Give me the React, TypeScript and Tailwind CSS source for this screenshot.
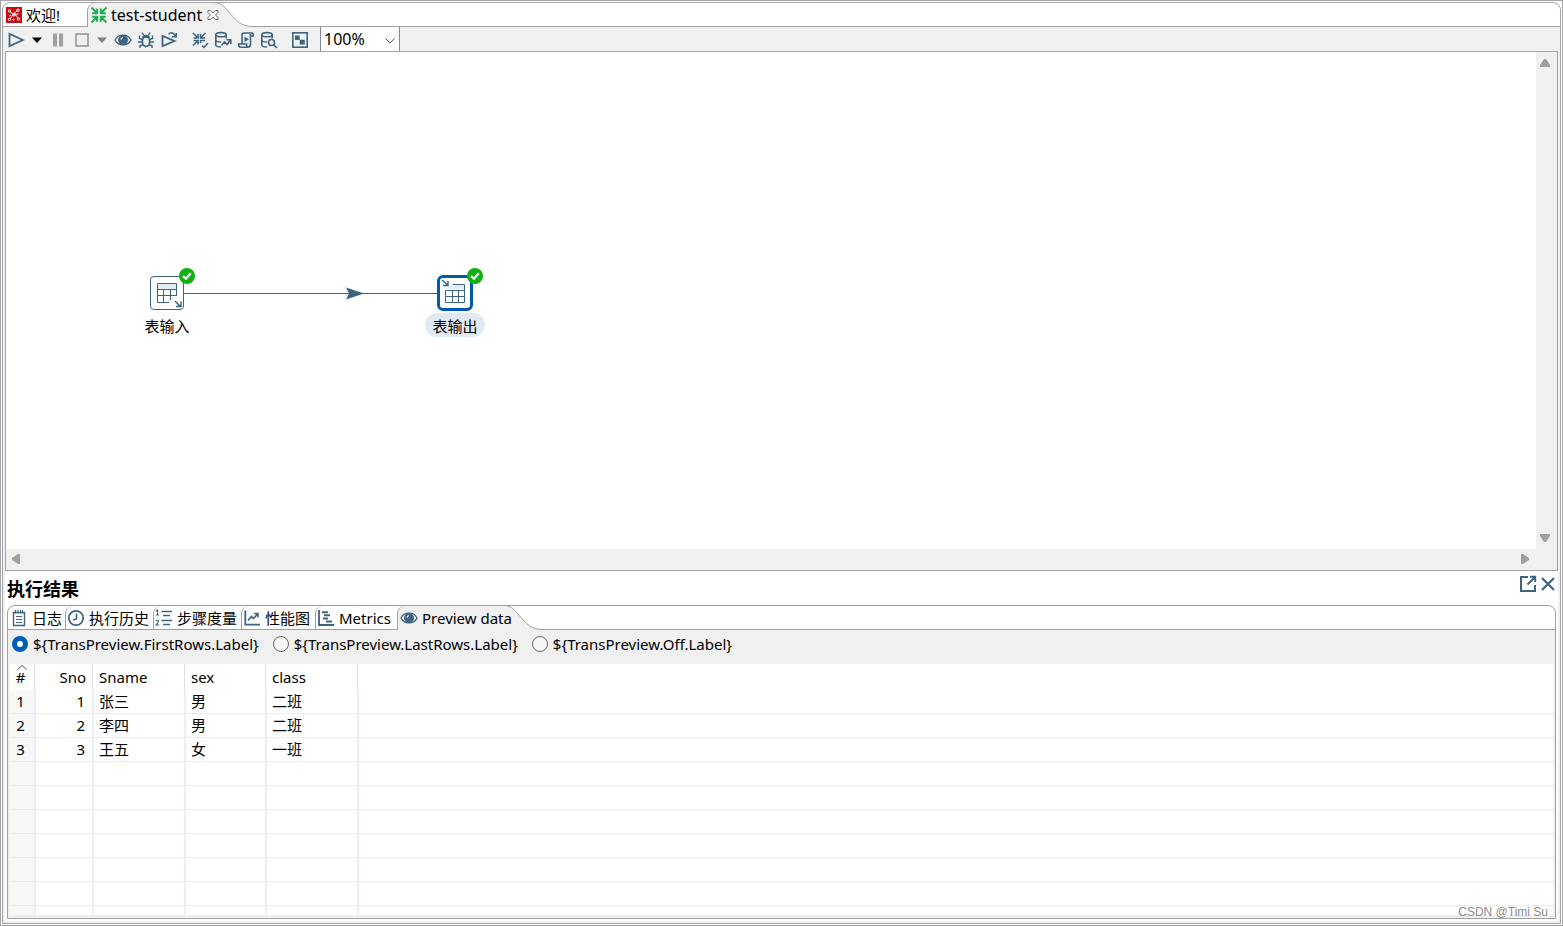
import type { ReactNode } from "react";

const C = "#3d6480";

function Glyph({ children, size = 18 }: { children: ReactNode; size?: number }) {
  return (
    <svg width={size} height={18} viewBox={`0 0 ${size} 18`} fill="none" stroke={C} strokeWidth="1.6" aria-hidden="true" className="block shrink-0">
      {children}
    </svg>
  );
}

const Eye = () => (
  <Glyph>
    <path d="M1 9C4 2.500 14 2.500 17 9C14 15.500 4 15.500 1 9Z" strokeWidth="1.300" />
    <circle cx="9" cy="9" r="5" fill={C} stroke="none" />
    <path d="M7 8.800A2 2 0 0 1 9 6.800" stroke="#fff" strokeWidth="1.100" />
  </Glyph>
);

const Play = () => (
  <Glyph>
    <path d="M2.500 3V15L16 9Z" strokeWidth="1.800" />
  </Glyph>
);

const Pause = () => (
  <Glyph>
    <path d="M4 2.500H8V15.500H4ZM10 2.500H14V15.500H10Z" fill="#a0a0a0" stroke="none" />
  </Glyph>
);

const Stop = () => (
  <Glyph>
    <rect x="3" y="3" width="12" height="12" stroke="#a0a0a0" strokeWidth="1.800" />
  </Glyph>
);

const Down = ({ color }: { color: string }) => (
  <Glyph size={10}>
    <path d="M0 6.500H10L5 12Z" fill={color} stroke="none" />
  </Glyph>
);

const Bug = () => (
  <Glyph>
    <ellipse cx="9" cy="10.500" rx="3.700" ry="5" strokeWidth="1.800" />
    <path d="M6 6C6.300 4 11.700 4 12 6Z" fill={C} />
    <path d="M6.500 4L5 1.500M11.500 4L13 1.500M5.500 8.500L2.500 7.500V4.500M12.500 8.500L15.500 7.500V4.500M5.300 11H1M12.700 11H17M6 14L3 14.500V17M12 14L15 14.500V17" strokeWidth="1.400" />
  </Glyph>
);

const Replay = () => (
  <Glyph>
    <path d="M2.500 4.800V15.200L14.500 10Z" strokeWidth="1.800" />
    <path d="M8.500 3.200C11 .8 14 1.800 15.500 5M16.300 2V5.700H12" strokeWidth="1.500" />
  </Glyph>
);

const Verify = () => (
  <Glyph>
    <path d="M2 2L6.500 6.500M14.500 2L10 6.500M2 14.500L6.500 10M7 3V7H2.500M9.500 3V7H14M2.500 9.500H7V13.500M14 9.500H9.500V12" strokeWidth="1.600" />
    <path d="M11 14.500L13 16.500L17 12" strokeWidth="1.500" />
  </Glyph>
);

const Cylinder = () => (
  <>
    <ellipse cx="7" cy="3.700" rx="5.200" ry="2.100" />
    <path d="M1.800 4V14C2 15.500 5 16 7 16M1.800 9C2 10.500 5 11 7 11M12.200 4V7.500" />
  </>
);

const DbImpact = () => (
  <Glyph>
    <Cylinder />
    <path d="M7.500 14.500L10.500 11L13 13.500L16.500 9M12.500 8.700H16.800V13" />
  </Glyph>
);

const DbExplore = () => (
  <Glyph>
    <Cylinder />
    <circle cx="11.500" cy="11.500" r="3" />
    <path d="M13.700 13.700L17 17" />
  </Glyph>
);

const Script = () => (
  <Glyph>
    <path d="M5 13V4Q5 2 7 2H14.500Q16.500 2 16.300 5H13.500M13.500 3V13Q13.500 16.200 10.500 16.200H3.500Q1.500 16.200 1.700 13H9.500Q9.500 16 11.500 16" />
    <path d="M7.500 5.500V11L12 8.300Z" fill={C} stroke="none" />
  </Glyph>
);

const Arrange = () => (
  <Glyph>
    <rect x="1.800" y="1.800" width="14.400" height="14.400" strokeWidth="1.600" />
    <path d="M4 4.500H8.700V9H4ZM8.700 8.700H13.800V13.500H8.700Z" fill={C} stroke="none" />
  </Glyph>
);

const Transform = () => (
  <svg width="18" height="18" viewBox="0 0 18 18" fill="none" stroke="#1caf50" strokeWidth="1.900" aria-hidden="true" className="block shrink-0">
    <path d="M1.500 1.500L7 7M16.500 1.500L11 7M1.500 16.500L7 11M16.500 16.500L11 11M7.200 2.500V7.200H2.200M10.800 2.500V7.200H15.800M2.200 10.800H7.200V15.800M15.800 10.800H10.800V15.800" />
  </svg>
);

const Logo = () => (
  <svg width="16" height="16" viewBox="0 0 16 16" fill="none" stroke="#fff" strokeWidth="0.900" aria-hidden="true" className="block shrink-0">
    <rect width="16" height="16" fill="#c60c12" stroke="none" />
    <path d="M4 4.500L7 7.500L11.500 3.500M7 7.500L4 12M7 7.500H9.500L12 11.500M5 8L3 9M9.500 7.500L12.500 7" />
    <circle cx="3.500" cy="4" r="1.200" />
    <circle cx="12" cy="3.200" r="1.200" />
    <circle cx="3.500" cy="12.300" r="1.200" />
    <circle cx="12.500" cy="12" r="1.200" />
    <circle cx="8" cy="7.500" r="1.500" />
    <circle cx="7.500" cy="12.800" r=".7" />
  </svg>
);

const Notes = () => (
  <Glyph>
    <path d="M3.500 3.500H14.500V16.500H3.500Z" strokeWidth="1.400" />
    <path d="M5.500 1V4.500M8 1V4.500M10.500 1V4.500M12.500 1V4.500" strokeWidth="1.100" />
    <path d="M6 7.500H12M6 10.500H12M6 13.500H12" strokeWidth="1.200" />
  </Glyph>
);

const Clock = () => (
  <Glyph>
    <circle cx="9" cy="9" r="7.200" strokeWidth="1.700" />
    <path d="M9.500 4.500V10L6 11" strokeWidth="1.600" />
  </Glyph>
);

const Steps = () => (
  <Glyph>
    <path d="M6.500 2.500H17M8 6.500H15M6.500 11.500H17M8 15.500H15" strokeWidth="1.300" />
    <path d="M1 2L2.500 1V6M1 6H4M1 12Q2.500 10.500 3.500 12Q3.500 13.500 1 16H4.200" strokeWidth="1.100" />
  </Glyph>
);

const Graph = () => (
  <Glyph>
    <path d="M2.300 1.500V15.700H17" strokeWidth="1.800" />
    <path d="M5 11.500L8.500 7.500L10.500 9.500L14.500 5M11 4.500H15V8.500" />
  </Glyph>
);

const Gantt = () => (
  <Glyph>
    <path d="M2 1V16H17" strokeWidth="1.800" />
    <path d="M5 3.300H11M7 6.300H13M6 9.500H11M9 12.500H15" strokeWidth="2" />
  </Glyph>
);

const Check = () => (
  <svg width="16" height="16" viewBox="0 0 16 16" fill="none" aria-hidden="true" className="block">
    <circle cx="8" cy="8" r="8" fill="#0fb010" />
    <path d="M4 8.200L7 10.800L11.800 5.200" stroke="#fff" strokeWidth="2.200" />
  </svg>
);

function TabEnd() {
  return (
    <svg width="40" height="25" viewBox="0 0 40 25" aria-hidden="true" className="absolute -top-px -right-9 block">
      <path d="M0 .5C10 .5 12 6 18 12.500S28 24.500 40 24.500V25H0Z" fill="#f0f0f0" />
      <path d="M0 .5C10 .5 12 6 18 12.500S28 24.500 40 24.500" fill="none" stroke="#a0a0a0" />
    </svg>
  );
}

function Tool({ label, className = "", children }: { label: string; className?: string; children: ReactNode }) {
  return (
    <button type="button" aria-label={label} className={`shrink-0 ${className}`}>
      {children}
    </button>
  );
}

const resultTabs = [
  { label: "日志", icon: <Notes />, box: "w-[57px] pl-[2px]" },
  { label: "执行历史", icon: <Clock />, box: "w-[88px] pl-px rounded-tl-lg border-l" },
  { label: "步骤度量", icon: <Steps />, box: "w-[88px] pl-px rounded-tl-lg border-l" },
  { label: "性能图", icon: <Graph />, box: "w-[74px] pl-px rounded-tl-lg border-l" },
  { label: "Metrics", icon: <Gantt />, box: "w-[82px] pl-px rounded-tl-lg border-l" },
];

const modes = ["${TransPreview.FirstRows.Label}", "${TransPreview.LastRows.Label}", "${TransPreview.Off.Label}"];

const rows = [
  ["1", "1", "张三", "男", "二班"],
  ["2", "2", "李四", "男", "二班"],
  ["3", "3", "王五", "女", "一班"],
  ...Array.from({ length: 6 }, () => ["", "", "", "", ""]),
];

function Canvas() {
  return (
    <main className="flex min-h-[300px] flex-1 flex-col border border-[#a5a5a9] bg-[#f0f0f0]">
      <div className="flex flex-1">
        <div className="relative flex-1 overflow-hidden bg-white">
          <svg width="260" height="14" viewBox="0 0 260 14" aria-hidden="true" className="absolute top-[234px] left-[177px]">
            <path d="M0 7.500H260" stroke={C} />
            <path d="M163 1.500L181 7.500L163 13.500L166 7.500Z" fill={C} />
          </svg>
          <div className="absolute top-[224px] left-[131px] flex w-[60px] flex-col items-center">
            <div className="relative h-[34px] w-[34px] rounded-[4px] border border-[#3d6480] bg-white">
              <svg width="32" height="32" viewBox="0 0 32 32" fill="none" stroke={C} aria-hidden="true">
                <path d="M6.500 12H26V6.500H6.500Z" fill="#e3edf5" stroke="none" />
                <path d="M25.500 19V6.500H6.500V25.500H18M6.500 12.500H25.500M6.500 18.500H25.500M12.500 12.500V25.500M19.500 12.500V23" />
                <path d="M24 24L29.500 29.500M30 24.500V29.500H25" strokeWidth="1.500" />
              </svg>
              <div className="absolute -top-[9px] -right-[12px]"><Check /></div>
            </div>
            <span className="mt-[4px] h-6 leading-6">表输入</span>
          </div>
          <div className="absolute top-[223px] left-[419px] flex w-[60px] flex-col items-center">
            <div className="relative h-9 w-9 rounded-[6px] border-3 border-[#005ca8] bg-white">
              <svg width="30" height="30" viewBox="0 0 30 30" fill="none" stroke={C} aria-hidden="true">
                <path d="M6 11H24V6H13Z" fill="#e3edf5" stroke="none" />
                <path d="M13 6.500H24.500V24.500H5.500V12.500H24.500M5.500 18.500H24.500M12.500 12.500V24.500M18.500 12.500V24.500" />
                <path d="M2 2L8 7.500M8 3V7.500H3" strokeWidth="1.500" />
              </svg>
              <div className="absolute -top-[10px] -right-[13px]"><Check /></div>
            </div>
            <span className="mt-[2px] h-6 w-[60px] rounded-full bg-[#e0eaf5] pt-px text-center leading-6">表输出</span>
          </div>
        </div>
        <div className="flex w-[21px] flex-col items-center justify-between py-[6px] pr-[3px]">
          <svg width="10" height="10" viewBox="0 0 10 10" aria-hidden="true"><path d="M4 1H6L10 7V9H0V7Z" fill="#a0a0a0" /></svg>
          <svg width="10" height="10" viewBox="0 0 10 10" aria-hidden="true"><path d="M4 9H6L10 3V1H0V3Z" fill="#a0a0a0" /></svg>
        </div>
      </div>
      <div className="flex h-[21px] items-center justify-between pr-[27px] pb-[2px] pl-[5px]">
        <svg width="10" height="10" viewBox="0 0 10 10" aria-hidden="true"><path d="M1 4V6L7 10H9V0H7Z" fill="#a0a0a0" /></svg>
        <svg width="10" height="10" viewBox="0 0 10 10" aria-hidden="true"><path d="M9 4V6L3 10H1V0H3Z" fill="#a0a0a0" /></svg>
      </div>
    </main>
  );
}

export default function App() {
  return (
    <div className="flex min-h-screen flex-col border border-[#a5a5a9] bg-white p-px font-['Noto_Sans','Noto_Sans_CJK_SC',sans-serif] text-[15px] leading-6 text-black">
      <div className="flex flex-1 flex-col rounded-t-lg border border-[#a5a5a9] bg-[#f0f0f0]">
        <div role="tablist" className="flex h-6 rounded-t-lg border-b border-[#a0a0a0] bg-white">
          <button type="button" role="tab" aria-selected="false" className="flex w-[84px] items-center gap-1 pl-[3px] whitespace-nowrap">
            <Logo />
            欢迎!
          </button>
          <div className="relative -mb-px flex w-[130px] items-center rounded-tl-lg border-l border-[#a0a0a0] bg-[#f0f0f0] pl-[2px]">
            <TabEnd />
            <button type="button" role="tab" aria-selected="true" className="relative flex items-center gap-[3px] text-base leading-6 whitespace-nowrap">
              <Transform />
              test-student
            </button>
            <button type="button" aria-label="Close" className="relative ml-[5px] shrink-0">
              <svg width="12" height="12" viewBox="0 0 12 12" fill="#fff" stroke="#666" aria-hidden="true">
                <path d="M1 1.500H3.500L6 4L8.500 1.500H11V3.500L8.500 6L11 8.500V10.500H8.500L6 8L3.500 10.500H1V8.500L3.500 6L1 3.500Z" />
              </svg>
            </button>
          </div>
        </div>

        <div role="toolbar" aria-label="Transformation" className="flex h-6 items-end pl-1 [&>button]:mb-[2px]">
          <Tool label="Run"><Play /></Tool>
          <Tool label="Run options" className="ml-[7px]"><Down color="#000" /></Tool>
          <Tool label="Pause" className="ml-[7px]"><Pause /></Tool>
          <Tool label="Stop" className="ml-[6px]"><Stop /></Tool>
          <Tool label="Stop options" className="ml-[6px]"><Down color="#808080" /></Tool>
          <Tool label="Preview" className="ml-[7px]"><Eye /></Tool>
          <Tool label="Debug" className="ml-[5px]"><Bug /></Tool>
          <Tool label="Replay" className="ml-[5px]"><Replay /></Tool>
          <Tool label="Verify" className="ml-[13px]"><Verify /></Tool>
          <Tool label="Impact" className="ml-[5px]"><DbImpact /></Tool>
          <Tool label="SQL" className="ml-[5px]"><Script /></Tool>
          <Tool label="Explore database" className="ml-[5px]"><DbExplore /></Tool>
          <Tool label="Show results" className="ml-[13px]"><Arrange /></Tool>
          <div className="relative ml-[11px] h-6 w-20 shrink-0">
            <select aria-label="Zoom" defaultValue="100%" className="h-full w-full appearance-none border-x border-[#8a8a8a] bg-white pl-[3px] text-base leading-6">
              <option>100%</option>
              <option>200%</option>
            </select>
            <svg width="10" height="6" viewBox="0 0 10 6" fill="none" stroke="#555" aria-hidden="true" className="pointer-events-none absolute top-[11px] right-[5px]">
              <path d="M.5 .5L5 5L9.500 .5" />
            </svg>
          </div>
        </div>

        <div className="flex flex-1 flex-col px-[2px] pb-[2px]">
          <Canvas />

          <section className="flex flex-col bg-white px-[2px] pb-[2px]">
            <header className="flex h-[34px] items-center justify-between">
              <h2 className="pt-px text-[18px] font-bold">执行结果</h2>
              <div className="mb-2 flex gap-[4px] pr-px">
                <Tool label="Maximize">
                  <Glyph>
                    <path d="M9 2H2V16H16V10M11 1.800H16.200V7M16 2L8.500 9.500" strokeWidth="2" />
                  </Glyph>
                </Tool>
                <Tool label="Close results">
                  <Glyph size={14}>
                    <path d="M1 3L13 15M13 3L1 15" strokeWidth="2.200" />
                  </Glyph>
                </Tool>
              </div>
            </header>

            <div className="rounded-t-lg border border-[#a0a0a0] bg-[#f0f0f0]">
              <div role="tablist" className="flex h-6 rounded-t-lg border-b border-[#a0a0a0] bg-white">
                {resultTabs.map((t) => (
                  <button key={t.label} type="button" role="tab" aria-selected="false" className={`flex shrink-0 items-center gap-1 border-[#a0a0a0] whitespace-nowrap ${t.box}`}>
                    {t.icon}
                    {t.label}
                  </button>
                ))}
                <div className="relative -mb-px flex w-[110px] items-center rounded-tl-lg border-l border-[#a0a0a0] bg-[#f0f0f0] pl-[2px]">
                  <TabEnd />
                  <button type="button" role="tab" aria-selected="true" className="relative flex items-center gap-1 whitespace-nowrap">
                    <Eye />
                    Preview data
                  </button>
                </div>
              </div>

              <fieldset className="flex h-[34px] items-start gap-[14px] pt-[2px] pl-1">
                {modes.map((m, i) => (
                  <label key={m} className="flex items-center gap-[5px] whitespace-nowrap">
                    <input
                      type="radio"
                      name="mode"
                      defaultChecked={i === 0}
                      className="h-4 w-4 shrink-0 appearance-none rounded-full border border-[#666] bg-[#f6f6f6] checked:border-5 checked:border-[#005fb8] checked:bg-white"
                    />
                    {m}
                  </label>
                ))}
              </fieldset>

              <div className="mx-[2px] mb-[2px] bg-white">
                <table className="w-full table-fixed border-separate border-spacing-0">
                  <thead>
                    <tr className="h-[26px] text-left [&>th]:border-r [&>th]:border-[#e0e0e0] [&>th]:p-0 [&>th]:font-normal [&>th:last-child]:border-r-0">
                      <th className="relative w-[25px]">
                        <svg width="10" height="5" viewBox="0 0 10 5" fill="none" stroke="#555" aria-hidden="true" className="absolute top-px left-[7px]">
                          <path d="M.5 4.500L5 .5L9.500 4.500" />
                        </svg>
                        <div className="pr-[3px] text-center">#</div>
                      </th>
                      <th className="w-[58px]"><div className="pr-[6px] text-right">Sno</div></th>
                      <th className="w-[92px]"><div className="pl-[6px]">Sname</div></th>
                      <th className="w-[81px]"><div className="pl-[6px]">sex</div></th>
                      <th className="w-[92px]"><div className="pl-[6px]">class</div></th>
                      <th aria-label="Filler" />
                    </tr>
                  </thead>
                  <tbody className="[&_td]:border-x [&_td]:border-b [&_td]:border-x-[#e9eff8] [&_td]:border-b-[#ececec] [&_td]:p-0 [&_td:first-child]:border-l-0 [&_td:last-child]:border-r-0">
                    {rows.map((r, i) => (
                      <tr key={i} className="h-6 leading-[23px]">
                        <td className="bg-[#f7f7f7]"><div className="pr-[3px] text-center">{r[0]}</div></td>
                        <td><div className="pr-[7px] text-right">{r[1]}</div></td>
                        <td><div className="pl-[5px]">{r[2]}</div></td>
                        <td><div className="pl-[5px]">{r[3]}</div></td>
                        <td><div className="pl-[5px]">{r[4]}</div></td>
                        <td />
                      </tr>
                    ))}
                    <tr className="h-[10px]">
                      <td className="bg-[#f7f7f7]" />
                      <td />
                      <td />
                      <td />
                      <td />
                      <td className="relative">
                        <span className="absolute right-[5px] bottom-[-6px] font-['Liberation_Sans',sans-serif] text-[12px] leading-[18px] whitespace-nowrap text-[#8c8c8c]">CSDN @Timi Su</span>
                      </td>
                    </tr>
                  </tbody>
                </table>
              </div>
            </div>
          </section>
        </div>
      </div>
    </div>
  );
}
